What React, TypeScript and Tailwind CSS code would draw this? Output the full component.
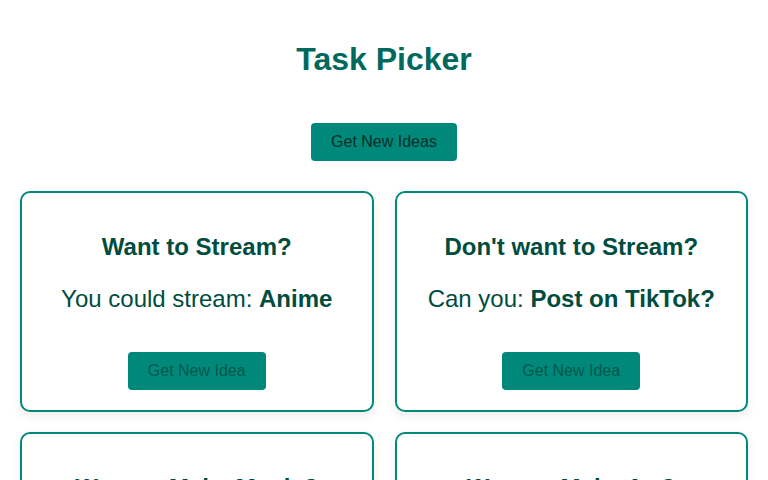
import { useState } from 'react'

type Picker = {
    title: string
    prompt: string
    ideas: string[]
}

const PICKERS: Picker[] = [
    {
        title: 'Want to Stream?',
        prompt: 'You could stream:',
        ideas: ['Anime', 'Just Chatting', 'Minecraft', 'Art'],
    },
    {
        title: "Don't want to Stream?",
        prompt: 'Can you:',
        ideas: ['Post on TikTok?', 'Edit a video?', 'Go for a walk?'],
    },
    {
        title: 'Want to Make Music?',
        prompt: 'You could make:',
        ideas: ['A beat', 'A cover', 'A remix'],
    },
    {
        title: 'Want to Make Art?',
        prompt: 'You could draw:',
        ideas: ['A portrait', 'A landscape', 'Fan art'],
    },
]

function pickOther(list: string[], current: number) {
    if (list.length < 2) return current
    let next = current
    while (next === current) next = Math.floor(Math.random() * list.length)
    return next
}

function PickerCard({ picker }: { picker: Picker }) {
    const [index, setIndex] = useState(0)

    return (
        <div className="flex flex-col items-center rounded-[10px] border-2 border-[#00897b] bg-white px-5 pb-5 pt-10 text-center shadow-[0_4px_10px_rgba(0,0,0,0.08)]">
            <h2 className="text-[24px] font-bold leading-[28px] text-[#004d40]">{picker.title}</h2>
            <p className="mt-6 text-[24px] leading-[28px] text-[#004d40]">
                {picker.prompt} <span className="font-bold">{picker.ideas[index]}</span>
            </p>
            <button
                onClick={() => setIndex(pickOther(picker.ideas, index))}
                className="mt-[39px] h-[38px] w-[138px] rounded-[4px] bg-[#00897b] text-[16px] text-[#00574b] hover:bg-[#00796b]"
            >
                Get New Idea
            </button>
        </div>
    )
}

export default function App() {
    const [seed, setSeed] = useState(0)

    return (
        <div
            className="min-h-screen bg-white p-5"
            style={{ fontFamily: '"Liberation Sans", Arial, sans-serif' }}
        >
            <h1 className="mt-[21px] text-center text-[32px] font-bold leading-[37px] text-[#00695c]">
                Task Picker
            </h1>

            <div className="mt-[45px] flex justify-center">
                <button
                    onClick={() => setSeed(seed + 1)}
                    className="h-[38px] w-[146px] rounded-[4px] bg-[#00897b] text-[16px] text-[#062e27] hover:bg-[#00796b]"
                >
                    Get New Ideas
                </button>
            </div>

            <div className="mt-[30px] grid grid-cols-2 gap-x-[21px] gap-y-[20px]">
                {PICKERS.map((p) => (
                    <PickerCard key={`${p.title}-${seed}`} picker={p} />
                ))}
            </div>
        </div>
    )
}
